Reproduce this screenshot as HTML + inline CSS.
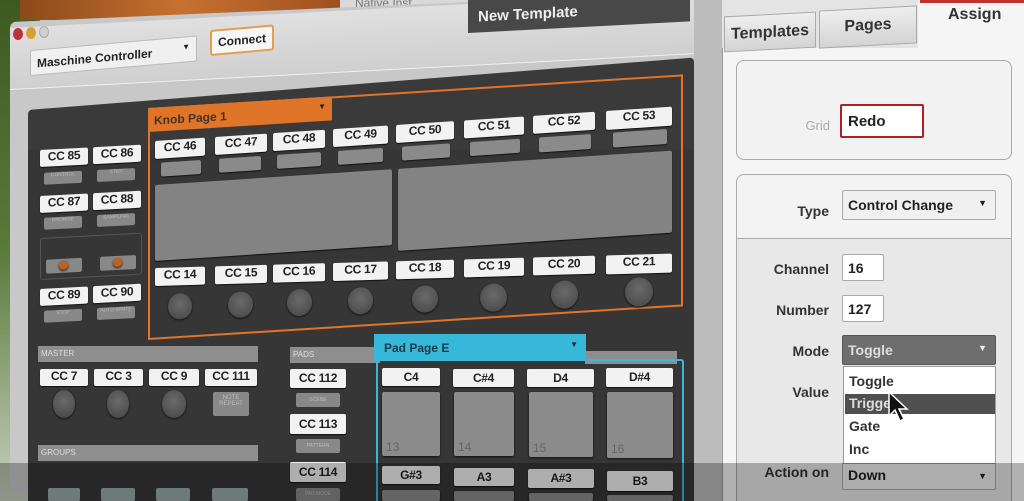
<!DOCTYPE html>
<html style="width:1024px;height:501px;overflow:hidden"><head><meta charset="utf-8"><style>
*{margin:0;padding:0;box-sizing:border-box}
body{width:1024px;height:501px;overflow:hidden;position:relative;background:#c9c9c9;font-family:"Liberation Sans",sans-serif}
#w{position:absolute;left:0;top:0;width:1024px;height:501px;overflow:hidden}
.a{position:absolute}
.row{position:absolute;transform-origin:0 0}
.lb{position:absolute;background:#f2f2f2;color:#222;font-size:12px;font-weight:bold;text-align:center;border-radius:2px;box-shadow:0 1px 1px #111;letter-spacing:-0.3px}
.bt{position:absolute;background:#8a8a8a;border-radius:2px;box-shadow:0 1px 1px #111}
.kn{position:absolute;border-radius:50%;background:radial-gradient(circle at 50% 40%,#6a6a6a,#444);box-shadow:0 1px 2px #111}
.sm{position:absolute;background:#888;color:#bbb;font-size:5px;text-align:center;border-radius:2px}
.bar{position:absolute;background:#8e8e8e;color:#ddd;font-size:8px;padding-left:3px;line-height:16px}
.pad{position:absolute;background:#8b8b8b;border-radius:2px;box-shadow:0 1px 2px #111;color:#666;font-size:12px}
.rl{position:absolute;font-size:14px;color:#333;font-weight:bold;text-align:right;width:80px}
.inp{position:absolute;background:#fff;border:1px solid #aaa;border-radius:2px;font-size:14px;font-weight:bold;color:#222;padding-left:5px}
</style></head><body><div id="w">
<div class="a" style="left:0;top:0;width:40px;height:501px;background:linear-gradient(#3d5a20,#5a7a3a 50%,#c8d0c0)"></div>
<div class="a" style="left:20px;top:0;width:320px;height:20px;background:linear-gradient(90deg,#8a4a1a,#c77030,#a05020)"></div>
<div class="a" style="left:340px;top:0;width:380px;height:14px;background:#d9d9d9"></div>
<div class="a" style="left:355px;top:-4px;font-size:12px;color:#777">Native Inst</div>
<div class="a" style="left:10px;top:22px;width:712px;height:470px;background:#c8c8c8;border-radius:6px 0 0 0;transform:skewY(-2.5deg);transform-origin:0 0"></div>
<div class="a" style="left:10px;top:28px;width:712px;height:62px;background:linear-gradient(#e0e0e0,#cfcfcf);transform:skewY(-3deg);transform-origin:0 0;border-bottom:1px solid #f0f0f0"></div>
<div class="a" style="left:13px;top:28px;width:10px;height:12px;border-radius:50%;background:#c0303a"></div>
<div class="a" style="left:26px;top:27px;width:10px;height:12px;border-radius:50%;background:#d8a030"></div>
<div class="a" style="left:39px;top:26px;width:10px;height:12px;border-radius:50%;background:#d0d0d0;border:1px solid #aaa"></div>
<div class="row" style="left:30px;top:58px;transform:skewY(-5deg)"><div class="a" style="left:0;top:-8px;width:167px;height:26px;background:#f0f0f0;border:1px solid #bbb;border-radius:2px;font-size:12px;font-weight:bold;color:#222;padding:6px 0 0 6px;white-space:nowrap">Maschine Controller<span style="position:absolute;right:6px;top:5px;font-size:8px">▼</span></div></div>
<div class="row" style="left:210px;top:36px;transform:skewY(-5deg)"><div class="a" style="left:0;top:-6px;width:64px;height:26px;background:#f6f6f6;border:2px solid #e0a050;border-radius:3px;font-size:12px;font-weight:bold;color:#222;text-align:center;line-height:22px">Connect</div></div>
<div class="row" style="left:468px;top:9px;transform:skewY(-3deg)"><div class="a" style="left:0;top:-12px;width:222px;height:36px;background:#484848;color:#eee;font-size:15px;font-weight:bold;padding:12px 0 0 10px">New Template</div></div>
<div class="a" style="left:28px;top:110px;width:666px;height:400px;background:#3a3a3a;transform:skewY(-4.5deg);transform-origin:0 0;border-radius:4px"></div>
<div class="a" style="left:28px;top:150px;width:666px;height:351px;background:#363636"></div>
<div class="row" style="left:148px;top:108px;transform:skewY(-3.6deg)">
 <div class="a" style="left:0;top:0;width:535px;height:232px;border:2px solid #e07428"></div>
 <div class="a" style="left:0;top:0;width:184px;height:24px;background:#e07428;color:#432;font-size:12px;font-weight:bold;padding:6px 0 0 6px">Knob Page 1<span style="position:absolute;right:6px;top:5px;font-size:8px;color:#222">▼</span></div>
</div>
<div class="row" style="left:155px;top:141px;transform:skewY(-3.8deg)">
 <div class="lb" style="left:0;width:50px;height:18px">CC 46</div><div class="lb" style="left:60px;width:52px;height:18px">CC 47</div><div class="lb" style="left:118px;width:52px;height:18px">CC 48</div><div class="lb" style="left:178px;width:55px;height:18px">CC 49</div><div class="lb" style="left:241px;width:58px;height:18px">CC 50</div><div class="lb" style="left:309px;width:60px;height:18px">CC 51</div><div class="lb" style="left:378px;width:62px;height:18px">CC 52</div><div class="lb" style="left:451px;width:66px;height:19px">CC 53</div>
 <div class="bt" style="left:6px;top:22px;width:40px;height:14px"></div><div class="bt" style="left:64px;top:22px;width:42px;height:14px"></div><div class="bt" style="left:122px;top:22px;width:44px;height:14px"></div><div class="bt" style="left:183px;top:22px;width:45px;height:14px"></div><div class="bt" style="left:247px;top:22px;width:48px;height:14px"></div><div class="bt" style="left:315px;top:22px;width:50px;height:14px"></div><div class="bt" style="left:384px;top:22px;width:52px;height:15px"></div><div class="bt" style="left:458px;top:22px;width:54px;height:15px"></div>
 <div class="bt" style="left:0;top:44px;width:237px;height:76px;background:#838383"></div>
 <div class="bt" style="left:243px;top:44px;width:274px;height:82px;background:#838383"></div>
</div>
<div class="row" style="left:155px;top:268px;transform:skewY(-1.6deg)">
 <div class="lb" style="left:0;width:50px;height:18px">CC 14</div><div class="lb" style="left:60px;width:52px;height:18px">CC 15</div><div class="lb" style="left:118px;width:52px;height:18px">CC 16</div><div class="lb" style="left:178px;width:55px;height:18px">CC 17</div><div class="lb" style="left:241px;width:58px;height:18px">CC 18</div><div class="lb" style="left:309px;width:60px;height:18px">CC 19</div><div class="lb" style="left:378px;width:62px;height:18px">CC 20</div><div class="lb" style="left:451px;width:66px;height:19px">CC 21</div>
 <div class="kn" style="left:13px;top:26px;width:24px;height:26px"></div><div class="kn" style="left:73px;top:26px;width:25px;height:26px"></div><div class="kn" style="left:132px;top:25px;width:25px;height:27px"></div><div class="kn" style="left:193px;top:25px;width:25px;height:27px"></div><div class="kn" style="left:257px;top:25px;width:26px;height:27px"></div><div class="kn" style="left:325px;top:25px;width:27px;height:28px"></div><div class="kn" style="left:396px;top:24px;width:27px;height:28px"></div><div class="kn" style="left:470px;top:23px;width:28px;height:29px"></div>
</div>
<div class="row" style="left:40px;top:150px;transform:skewY(-3deg)">
 <div class="lb" style="left:0;width:48px;height:17px">CC 85</div><div class="lb" style="left:53px;width:48px;height:17px">CC 86</div>
 <div class="sm" style="left:4px;top:23px;width:38px;height:12px">CONTROL</div><div class="sm" style="left:57px;top:23px;width:38px;height:12px">STEP</div>
 <div class="lb" style="left:0;top:46px;width:48px;height:17px">CC 87</div><div class="lb" style="left:53px;top:46px;width:48px;height:17px">CC 88</div>
 <div class="sm" style="left:4px;top:68px;width:38px;height:12px">BROWSE</div><div class="sm" style="left:57px;top:68px;width:38px;height:12px">SAMPLING</div>
 <div class="a" style="left:0;top:88px;width:102px;height:42px;border:1px solid #555;border-radius:3px"></div>
 <div class="sm" style="left:6px;top:110px;width:36px;height:14px;background:#888"></div><div class="sm" style="left:60px;top:110px;width:36px;height:14px;background:#888"></div>
 <div class="kn" style="left:19px;top:112px;width:9px;height:9px;background:#c06020"></div><div class="kn" style="left:73px;top:112px;width:9px;height:9px;background:#c06020"></div>
 <div class="lb" style="left:0;top:139px;width:48px;height:17px">CC 89</div><div class="lb" style="left:53px;top:139px;width:48px;height:17px">CC 90</div>
 <div class="sm" style="left:4px;top:161px;width:38px;height:12px">STOP</div><div class="sm" style="left:57px;top:161px;width:38px;height:12px">AUTO WRITE</div>
</div>
<div class="bar" style="left:38px;top:346px;width:220px;height:16px">MASTER</div>
<div class="lb" style="left:40px;top:369px;width:48px;height:17px">CC 7</div><div class="lb" style="left:94px;top:369px;width:49px;height:17px">CC 3</div><div class="lb" style="left:149px;top:369px;width:50px;height:17px">CC 9</div><div class="lb" style="left:205px;top:369px;width:52px;height:17px">CC 111</div>
<div class="kn" style="left:53px;top:390px;width:22px;height:28px"></div><div class="kn" style="left:107px;top:390px;width:22px;height:28px"></div><div class="kn" style="left:162px;top:390px;width:24px;height:28px"></div>
<div class="sm" style="left:213px;top:392px;width:36px;height:24px;font-size:6px;padding-top:3px">NOTE REPEAT</div>
<div class="bar" style="left:38px;top:445px;width:220px;height:16px">GROUPS</div>
<div class="a" style="left:48px;top:488px;width:32px;height:13px;background:#9aa;border-radius:2px"></div><div class="a" style="left:101px;top:488px;width:34px;height:13px;background:#9aa;border-radius:2px"></div><div class="a" style="left:156px;top:488px;width:34px;height:13px;background:#9aa;border-radius:2px"></div><div class="a" style="left:212px;top:488px;width:36px;height:13px;background:#9aa;border-radius:2px"></div>
<div class="bar" style="left:290px;top:347px;width:90px;height:16px">PADS</div>
<div class="a" style="left:585px;top:351px;width:92px;height:13px;background:#8e8e8e"></div>
<div class="lb" style="left:290px;top:369px;width:56px;height:19px;line-height:19px">CC 112</div>
<div class="sm" style="left:296px;top:393px;width:44px;height:14px;line-height:14px">SCENE</div>
<div class="lb" style="left:290px;top:414px;width:56px;height:20px;line-height:20px">CC 113</div>
<div class="sm" style="left:296px;top:439px;width:44px;height:14px;line-height:14px">PATTERN</div>
<div class="lb" style="left:290px;top:462px;width:56px;height:20px;line-height:20px">CC 114</div>
<div class="sm" style="left:296px;top:488px;width:44px;height:13px;line-height:13px">PAD MODE</div>
<div class="a" style="left:374px;top:334px;width:212px;height:27px;background:#38b8d8;color:#1a3a4a;font-size:12px;font-weight:bold;padding:7px 0 0 10px">Pad Page E<span style="position:absolute;right:8px;top:6px;font-size:8px;color:#223">▼</span></div>
<div class="a" style="left:376px;top:359px;width:308px;height:142px;border:2px solid #38b8d8;border-bottom:none;border-radius:3px 3px 0 0"></div>
<div class="lb" style="left:382px;top:368px;width:58px;height:18px;line-height:18px">C4</div><div class="lb" style="left:453px;top:369px;width:61px;height:18px;line-height:18px">C#4</div><div class="lb" style="left:527px;top:369px;width:67px;height:18px;line-height:18px">D4</div><div class="lb" style="left:606px;top:368px;width:67px;height:19px;line-height:19px">D#4</div>
<div class="pad" style="left:382px;top:392px;width:58px;height:64px"><span style="position:absolute;left:4px;bottom:2px">13</span></div>
<div class="pad" style="left:454px;top:392px;width:60px;height:64px"><span style="position:absolute;left:4px;bottom:2px">14</span></div>
<div class="pad" style="left:529px;top:392px;width:64px;height:65px"><span style="position:absolute;left:4px;bottom:2px">15</span></div>
<div class="pad" style="left:607px;top:392px;width:66px;height:66px"><span style="position:absolute;left:4px;bottom:2px">16</span></div>
<div class="lb" style="left:382px;top:466px;width:58px;height:18px;line-height:18px">G#3</div><div class="lb" style="left:454px;top:468px;width:60px;height:18px;line-height:18px">A3</div><div class="lb" style="left:528px;top:469px;width:66px;height:19px;line-height:19px">A#3</div><div class="lb" style="left:607px;top:471px;width:66px;height:20px;line-height:20px">B3</div>
<div class="pad" style="left:382px;top:490px;width:58px;height:11px"></div><div class="pad" style="left:454px;top:491px;width:60px;height:10px"></div><div class="pad" style="left:529px;top:493px;width:64px;height:8px"></div><div class="pad" style="left:607px;top:495px;width:66px;height:6px"></div>
<div class="a" style="left:694px;top:0;width:30px;height:501px;background:#bcbcbc"></div>
<div class="a" style="left:722px;top:0;width:302px;height:501px;background:#e4e4e4"></div>
<div class="a" style="left:722px;top:48px;width:302px;height:453px;background:#f5f5f5;border-left:1px solid #999"></div>
<div class="a" style="left:724px;top:14px;width:92px;height:36px;background:linear-gradient(#eee,#d4d4d4);border:1px solid #aaa;font-size:16px;font-weight:bold;color:#333;text-align:center;padding-top:9px;transform:skewY(-3deg)">Templates</div>
<div class="a" style="left:819px;top:8px;width:98px;height:38px;background:linear-gradient(#eee,#d4d4d4);border:1px solid #aaa;font-size:16px;font-weight:bold;color:#333;text-align:center;padding-top:8px;transform:skewY(-3deg)">Pages</div>
<div class="a" style="left:918px;top:0;width:106px;height:48px;background:#f5f5f5;font-size:16px;font-weight:bold;color:#333;padding:6px 0 0 30px">Assign</div>
<div class="a" style="left:920px;top:0;width:104px;height:3px;background:#c03030"></div>
<div class="a" style="left:736px;top:60px;width:276px;height:100px;border:1px solid #aaa;border-radius:8px;background:#f2f2f2"></div>
<div class="a" style="left:760px;top:118px;width:70px;text-align:right;font-size:13px;color:#aaa">Grid</div>
<div class="a" style="left:840px;top:104px;width:84px;height:34px;border:2px solid #b02020;border-radius:2px;background:#fff;font-size:15px;font-weight:bold;color:#222;padding:7px 0 0 6px">Redo</div>
<div class="a" style="left:736px;top:174px;width:276px;height:327px;border:1px solid #aaa;border-bottom:none;border-radius:8px 8px 0 0;background:#e8e8e8"></div>
<div class="a" style="left:737px;top:175px;width:274px;height:64px;border-radius:8px 8px 0 0;background:#f3f3f3;border-bottom:1px solid #aaa"></div>
<div class="rl" style="left:749px;top:203px">Type</div>
<div class="inp" style="left:842px;top:190px;width:154px;height:30px;background:#f0f0f0;padding-top:6px">Control Change<span style="position:absolute;right:8px;top:7px;font-size:9px">▼</span></div>
<div class="rl" style="left:749px;top:261px">Channel</div>
<div class="inp" style="left:842px;top:254px;width:42px;height:27px;padding-top:5px">16</div>
<div class="rl" style="left:749px;top:302px">Number</div>
<div class="inp" style="left:842px;top:295px;width:42px;height:27px;padding-top:5px">127</div>
<div class="rl" style="left:749px;top:343px">Mode</div>
<div class="inp" style="left:842px;top:335px;width:154px;height:30px;background:#6e6e6e;border-color:#555;color:#ddd;padding-top:6px">Toggle<span style="position:absolute;right:8px;top:7px;font-size:9px;color:#eee">▼</span></div>
<div class="rl" style="left:749px;top:384px">Value</div>
<div class="rl" style="left:749px;top:464px">Action on</div>
<div class="inp" style="left:842px;top:462px;width:154px;height:28px;background:#f0f0f0;padding-top:4px">Down<span style="position:absolute;right:8px;top:8px;font-size:9px">▼</span></div>
<div class="a" style="left:843px;top:366px;width:153px;height:98px;background:#fff;border:1px solid #999;font-size:14px;font-weight:bold;color:#333">
 <div class="a" style="left:5px;top:6px">Toggle</div>
 <div class="a" style="left:1px;top:27px;width:150px;height:20px;background:#505050;color:#ddd;padding:1px 0 0 4px">Trigger</div>
 <div class="a" style="left:5px;top:51px">Gate</div>
 <div class="a" style="left:5px;top:74px">Inc</div>
</div>
<svg class="a" style="left:886px;top:390px" width="26" height="36" viewBox="0 0 26 36"><path d="M3 2 L3 26 L9 20 L14 31 L18 29 L13 19 L21 19 Z" fill="#111" stroke="#fff" stroke-width="1.5"/></svg>
<div class="a" style="left:0;top:463px;width:1024px;height:38px;background:rgba(0,0,0,0.28)"></div>
</div></body></html>
